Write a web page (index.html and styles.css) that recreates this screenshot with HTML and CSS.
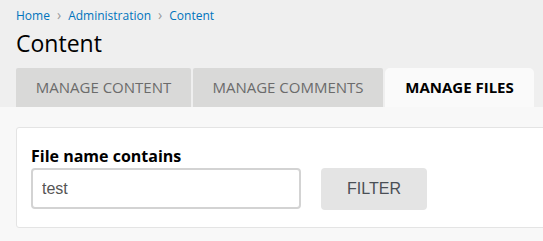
FILE: index.html
```html
<!DOCTYPE html>
<html>
<head>
<meta charset="utf-8">
<link rel="stylesheet" href="styles.css">
</head>
<body>
<div class="header">
  <nav class="crumbs">
    <a href="#">Home</a><span class="sep">&rsaquo;</span><a href="#">Administration</a><span class="sep">&rsaquo;</span><a href="#">Content</a>
  </nav>
  <h1 class="title">Content</h1>
  <div class="tabs">
    <a class="tab tab-content" href="#">Manage content</a>
    <a class="tab tab-comments" href="#">Manage comments</a>
    <a class="tab tab-files active" href="#">Manage files</a>
  </div>
</div>
<div class="main">
  <div class="panel">
    <label class="label" for="fn">File name contains</label>
    <div class="row">
      <input id="fn" class="input" type="text" value="test">
      <button class="btn">FILTER</button>
    </div>
  </div>
</div>
</body>
</html>
```
FILE: styles.css
```css
html, body {
  margin: 0;
  padding: 0;
  background: #f8f8f8;
  overflow: hidden;
}
body {
  font-family: "Open Sans", "DejaVu Sans", sans-serif;
  width: 543px;
  height: 241px;
}
.header {
  background: #efefef;
  padding: 6px 16px 0;
}
.crumbs {
  font-size: 12px;
  line-height: 18px;
  height: 18px;
  white-space: nowrap;
}
.crumbs a {
  color: #0074bd;
  text-decoration: none;
}
.crumbs .sep {
  color: #999;
  padding: 0 7px;
  font-size: 14px;
}
.title {
  margin: 0;
  font-weight: 400;
  font-size: 23px;
  line-height: 38px;
  color: #000;
}
.tabs {
  display: flex;
  gap: 2px;
  margin-top: 6px;
}
.tab {
  display: block;
  flex-shrink: 0;
  box-sizing: border-box;
  white-space: nowrap;
  text-align: center;
  height: 39px;
  line-height: 39px;
  padding: 0;
  background: #d9d9d8;
  color: #6b6b6b;
  font-size: 15px;
  text-transform: uppercase;
  text-decoration: none;
  border-radius: 2px 2px 0 0;
}
.tab-content { width: 175px; }
.tab-comments { width: 190px; }
.tab-files { width: 149px; }
.tab.active {
  background: #fafafa;
  color: #000;
  font-weight: 700;
  border-radius: 5px 5px 0 0;
}
.main {
  padding: 20px 0 0 16px;
}
.panel {
  background: #fff;
  border: 1px solid #e4e4e4;
  border-radius: 3px;
  margin-right: -20px;
  padding: 17px 14px 15px 14px;
  height: 67px;
}
.label {
  display: block;
  font-weight: 700;
  font-size: 16px;
  line-height: 22px;
  color: #000;
  white-space: nowrap;
}
.row {
  display: flex;
  gap: 20px;
  margin-top: 1px;
}
.input {
  box-sizing: border-box;
  width: 270px;
  height: 41px;
  border: 2px solid #d3d3d3;
  border-radius: 4px;
  background: #fff;
  padding: 0 9px;
  font-family: "Liberation Sans", Arial, sans-serif;
  font-size: 16px;
  color: #555;
  margin: 0;
}
.btn {
  width: 106px;
  height: 42px;
  border: 0;
  border-radius: 4px;
  background: #e4e4e4;
  color: #4a4f56;
  font-family: "Liberation Sans", Arial, sans-serif;
  font-size: 16px;
  padding: 0;
  margin: 0;
}
```
